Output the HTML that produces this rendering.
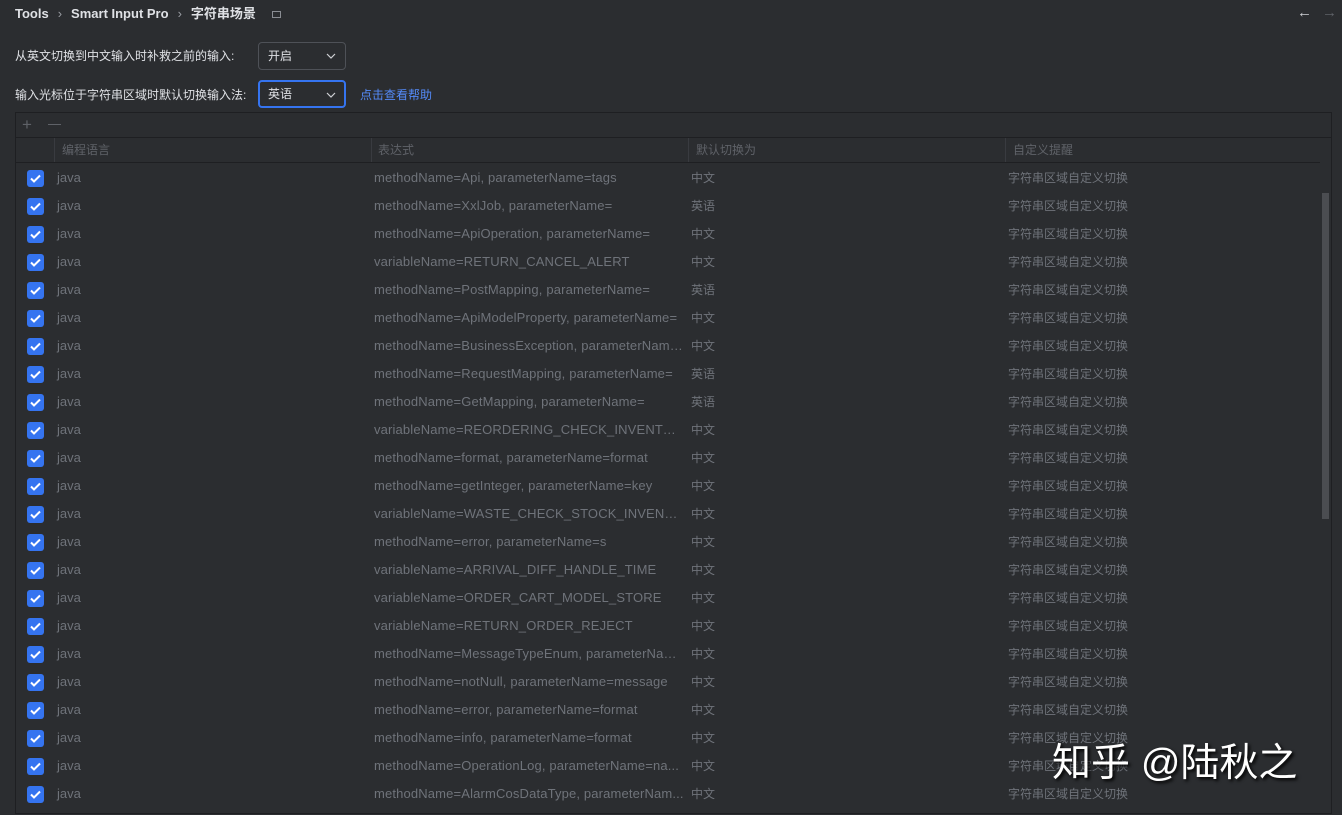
<!DOCTYPE html>
<html><head><meta charset="utf-8"><style>
*{margin:0;padding:0;box-sizing:border-box}
body{width:1342px;height:815px;background:#2b2d30;font-family:"Liberation Sans","Noto Sans CJK SC",sans-serif;color:#dfe1e5;font-size:13px;position:relative;overflow:hidden}
.abs{position:absolute}
.crumb{top:6px;left:15px;font-size:13px;line-height:16px;font-weight:bold;color:#dfe1e5;white-space:nowrap}
.crumb span.sep{color:#9a9da3;font-weight:normal;margin:0 9px}
.lbl{left:15px;font-size:12px;line-height:16px;color:#dfe1e5}
.sel{left:258px;width:88px;height:28px;border:1px solid #4e5157;border-radius:4px;background:#2b2d30;padding:0 9px;font-size:12px;line-height:26px}
.sel.f{border:2px solid #3574f0;padding:0 8px;line-height:24px}
.sel svg{position:absolute;right:9px;top:10px}
.tbl{left:15px;top:112px;width:1317px;height:702px;border:1px solid #1e1f22}
.row{position:absolute;left:0;height:28px;width:1304px;font-size:13px;color:#6f737a}
.row div{position:absolute;top:6px;white-space:nowrap;line-height:16px;height:16px}
.row .z{font-size:12px}
.cb{left:11px;top:6px!important;width:17px!important;height:17px!important;background:#3574f0;border-radius:3px}
.hdr div{color:#5f6268;font-size:12px}
.ex{overflow:hidden;text-overflow:ellipsis;letter-spacing:0.15px}
</style></head><body>
<div class="abs crumb">Tools<span class="sep">›</span>Smart Input Pro<span class="sep">›</span>字符串场景 <span style="display:inline-block;width:9px;height:7px;border:1px solid #8a8d93;margin-left:12px;vertical-align:middle"></span></div>
<div class="abs" style="top:4px;left:1297px;color:#cfd1d5;font-size:15px">←</div>
<div class="abs" style="top:4px;left:1322px;color:#5f6268;font-size:15px">→</div>
<div class="abs lbl" style="top:48px">从英文切换到中文输入时补救之前的输入:</div>
<div class="abs sel" style="top:42px">开启<svg width="10" height="7"><path d="M1 1l4 4 4-4" stroke="#cfd1d5" fill="none" stroke-width="1.2"/></svg></div>
<div class="abs lbl" style="top:87px">输入光标位于字符串区域时默认切换输入法:</div>
<div class="abs sel f" style="top:80px">英语<svg width="10" height="7" style="right:8px;top:10px"><path d="M1 1l4 4 4-4" stroke="#cfd1d5" fill="none" stroke-width="1.2"/></svg></div>
<div class="abs" style="top:87px;left:360px;color:#548af7;font-size:12px;line-height:16px">点击查看帮助</div>
<div class="abs tbl">
<div class="abs" style="left:6px;top:2px;color:#5f6268;font-size:17px">+</div>
<div class="abs" style="left:32px;top:11px;width:13px;height:1px;background:#5f6268"></div>
<div class="abs" style="left:0;top:24px;width:1315px;height:1px;background:#1e1f22"></div>
<div class="row hdr" style="top:25px;height:25px"><div style="left:38px;top:0;height:25px;border-left:1px solid #393b40"></div><div style="left:46px;top:4px">编程语言</div><div style="left:355px;top:0;height:25px;border-left:1px solid #393b40"></div><div style="left:362px;top:4px">表达式</div><div style="left:672px;top:0;height:25px;border-left:1px solid #393b40"></div><div style="left:680px;top:4px">默认切换为</div><div style="left:989px;top:0;height:25px;border-left:1px solid #393b40"></div><div style="left:997px;top:4px">自定义提醒</div></div>
<div class="abs" style="left:0;top:49px;width:1304px;height:1px;background:#1e1f22"></div>
<div class="abs" style="left:1306px;top:80px;width:7px;height:326px;background:#4b4d51"></div>
<div id="rows"></div>
</div>
<div class="abs" style="left:1052px;top:732px;font-size:39px;color:#fff;text-shadow:2px 2px 3px #000;white-space:nowrap">知乎 @陆秋之</div>
<script>
var d=[["methodName=Api, parameterName=tags","中文"],["methodName=XxlJob, parameterName=","英语"],["methodName=ApiOperation, parameterName=","中文"],["variableName=RETURN_CANCEL_ALERT","中文"],["methodName=PostMapping, parameterName=","英语"],["methodName=ApiModelProperty, parameterName=","中文"],["methodName=BusinessException, parameterName...","中文"],["methodName=RequestMapping, parameterName=","英语"],["methodName=GetMapping, parameterName=","英语"],["variableName=REORDERING_CHECK_INVENTORY","中文"],["methodName=format, parameterName=format","中文"],["methodName=getInteger, parameterName=key","中文"],["variableName=WASTE_CHECK_STOCK_INVENTORY_...","中文"],["methodName=error, parameterName=s","中文"],["variableName=ARRIVAL_DIFF_HANDLE_TIME","中文"],["variableName=ORDER_CART_MODEL_STORE","中文"],["variableName=RETURN_ORDER_REJECT","中文"],["methodName=MessageTypeEnum, parameterNam...","中文"],["methodName=notNull, parameterName=message","中文"],["methodName=error, parameterName=format","中文"],["methodName=info, parameterName=format","中文"],["methodName=OperationLog, parameterName=na...","中文"],["methodName=AlarmCosDataType, parameterNam...","中文"]];
var h="";d.forEach(function(r,i){h+='<div class="row" style="top:'+(51+i*28)+'px"><div class="cb"><svg width="17" height="17"><path d="M4 8.5l3 3 6-6" stroke="#fff" stroke-width="2" fill="none"/></svg></div><div style="left:41px">java</div><div class="ex" style="left:358px;width:310px">'+r[0]+'</div><div class="z" style="left:675px">'+r[1]+'</div><div class="z" style="left:992px">字符串区域自定义切换</div></div>'});
document.getElementById("rows").innerHTML=h;
</script>
</body></html>
